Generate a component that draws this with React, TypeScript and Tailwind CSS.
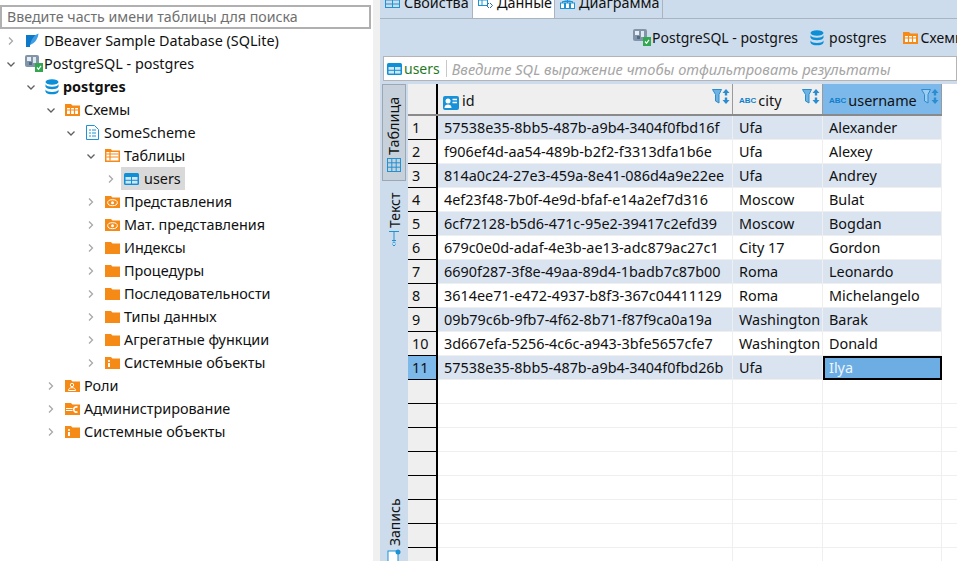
import type { ReactNode } from 'react'

const ROWS = [
  ['57538e35-8bb5-487b-a9b4-3404f0fbd16f', 'Ufa', 'Alexander'],
  ['f906ef4d-aa54-489b-b2f2-f3313dfa1b6e', 'Ufa', 'Alexey'],
  ['814a0c24-27e3-459a-8e41-086d4a9e22ee', 'Ufa', 'Andrey'],
  ['4ef23f48-7b0f-4e9d-bfaf-e14a2ef7d316', 'Moscow', 'Bulat'],
  ['6cf72128-b5d6-471c-95e2-39417c2efd39', 'Moscow', 'Bogdan'],
  ['679c0e0d-adaf-4e3b-ae13-adc879ac27c1', 'City 17', 'Gordon'],
  ['6690f287-3f8e-49aa-89d4-1badb7c87b00', 'Roma', 'Leonardo'],
  ['3614ee71-e472-4937-b8f3-367c04411129', 'Roma', 'Michelangelo'],
  ['09b79c6b-9fb7-4f62-8b71-f87f9ca0a19a', 'Washington', 'Barak'],
  ['3d667efa-5256-4c6c-a943-3bfe5657cfe7', 'Washington', 'Donald'],
  ['57538e35-8bb5-487b-a9b4-3404f0fbd26b', 'Ufa', 'Ilya'],
]

function Chevron({ open }: { open?: boolean }) {
  return (
    <svg width="10" height="10" viewBox="0 0 10 10" className="shrink-0">
      {open ? (
        <path d="M1.500 3.500 5 7l3.500-3.500" fill="none" stroke="#5f5f5f" strokeWidth="1.300" />
      ) : (
        <path d="M3 1.500 6.500 5 3 8.500" fill="none" stroke="#a8a8a8" strokeWidth="1.300" />
      )}
    </svg>
  )
}

function Folder({ children }: { children?: ReactNode }) {
  return (
    <svg width="15" height="13" viewBox="0 0 15 13" className="shrink-0">
      <path d="M0 1h6l1.500 1.600H15V13H0z" fill="#f68a16" />
      {children}
    </svg>
  )
}

const EyeFolder = () => (
  <Folder>
    <ellipse cx="7.500" cy="7.700" rx="4.800" ry="3" fill="none" stroke="#fff" strokeWidth="1" />
    <circle cx="7.500" cy="7.700" r="1.500" fill="#fff" />
  </Folder>
)

const InfoFolder = () => (
  <Folder>
    <rect x="3" y="4.200" width="2" height="1.600" fill="#fff" />
    <rect x="3" y="7" width="2" height="4" fill="#fff" />
  </Folder>
)

const RoleFolder = () => (
  <Folder>
    <circle cx="7" cy="6" r="1.700" fill="none" stroke="#fff" />
    <path d="M3.500 11.500c0-2 1.500-2.800 3.500-2.800s3.500.8 3.500 2.800z" fill="none" stroke="#fff" />
  </Folder>
)

const AdminFolder = () => (
  <Folder>
    <path d="M1 6.500h6.500M1 8.500h6.500" stroke="#fff" strokeWidth="1.200" />
    <path d="M12.500 5.200A2.600 2.600 0 1 0 12.500 9.800" fill="none" stroke="#fff" strokeWidth="1.600" />
  </Folder>
)

const SchemasIcon = () => (
  <svg width="15" height="13" viewBox="0 0 15 13" className="shrink-0">
    <path d="M0 1h6l1.500 1.600H15V13H0z" fill="#f68a16" />
    <path d="M2 5h11v6H2z" fill="#fff" />
    <path d="M5.500 5v6M9.500 5v6M2 7h11" stroke="#f68a16" strokeWidth="1.200" />
  </svg>
)

const TablesIcon = () => (
  <svg width="15" height="13" viewBox="0 0 15 13" className="shrink-0">
    <path d="M0 0h6l1 1.500h8V13H0z" fill="#f68a16" />
    <path d="M1.500 3h12v8.500h-12z" fill="#fff" />
    <path d="M1.500 5h12M1.500 8h12M5 3v8.500" stroke="#f68a16" strokeWidth="1.200" />
  </svg>
)

const DatabaseIcon = () => (
  <svg width="14" height="16" viewBox="0 0 14 16" className="shrink-0">
    <ellipse cx="7" cy="3" rx="6.500" ry="2.800" fill="#0d8fd8" />
    <path d="M.5 5.200c1 1.800 3.500 2.500 6.500 2.500s5.500-.7 6.500-2.500v2.600c-1 1.800-3.500 2.500-6.500 2.500S1.500 9.600.5 7.800z" fill="#0d8fd8" />
    <path d="M.5 10.400c1 1.800 3.500 2.500 6.500 2.500s5.500-.7 6.500-2.500v2.300c-.8 1.800-3.500 2.600-6.500 2.600s-5.700-.8-6.500-2.600z" fill="#0d8fd8" />
  </svg>
)

const SchemeIcon = () => (
  <svg width="15" height="15" viewBox="-1 0 15 15" className="shrink-0">
    <path d="M.5.500h8l4 4v10H.5z" fill="#fff" stroke="#1c93d4" />
    <path d="M3 5h2M6 5h4M3 8h2M6 8h4M3 11h2M6 11h4" stroke="#1c93d4" strokeWidth="1.200" />
  </svg>
)

const TableIcon = () => (
  <svg width="15" height="12" viewBox="0 0 15 12" className="shrink-0">
    <rect x="0" y="0" width="15" height="12" rx="1.500" fill="#0f8fd6" />
    <rect x="1.500" y="4" width="5.500" height="2.800" fill="#cfe7f7" />
    <rect x="8" y="4" width="5.500" height="2.800" fill="#cfe7f7" />
    <rect x="1.500" y="7.800" width="5.500" height="2.800" fill="#cfe7f7" />
    <rect x="8" y="7.800" width="5.500" height="2.800" fill="#cfe7f7" />
  </svg>
)

const PostgresIcon = () => (
  <svg width="18" height="17" viewBox="0 0 18 17" className="shrink-0">
    <rect x="0" y="0" width="14" height="12" rx="2" fill="#8294a8" />
    <rect x="2" y="2" width="4" height="4" fill="#e8eef4" />
    <rect x="8" y="2" width="3" height="6" fill="#dfe7ef" />
    <rect x="4" y="7" width="3" height="3" fill="#4d6c8c" />
    <rect x="10" y="8" width="8" height="9" fill="#2fa84f" />
    <path d="M12 12.500l1.500 1.800 2.500-3.500" fill="none" stroke="#fff" strokeWidth="1.200" />
  </svg>
)

const SqliteIcon = () => (
  <svg width="15" height="15" viewBox="0 0 15 15" className="shrink-0">
    <path d="M1 2h10L8 9l-3 3v2H1z" fill="#0f79c9" />
    <path d="M5 12C6 7 9 2 13.500.5 13 5 10.500 10 5 12z" fill="#3f9fe6" />
  </svg>
)

function TreeRow({
  level, open, icon, label, bold, selected, tight,
}: {
  level: number; open?: boolean; icon: ReactNode; label: string; bold?: boolean; selected?: boolean; tight?: boolean
}) {
  const pad = ['pl-[6px]', 'pl-[26px]', 'pl-[46px]', 'pl-[66px]', 'pl-[86px]', 'pl-[106px]'][level]
  return (
    <div className={`flex h-[23px] items-center ${pad}`}>
      <Chevron open={open} />
      <div className={`ml-[5px] flex h-full items-center ${selected ? 'bg-[#d9d9d9] pl-[3px] pr-[4px]' : 'pl-[4px]'}`}>
        {icon}
        <span className={`whitespace-nowrap ${tight ? 'ml-[1px]' : selected ? 'ml-[5px]' : 'ml-[4px]'} ${bold ? 'font-bold' : ''}`}>{label}</span>
      </div>
    </div>
  )
}

function Tree() {
  return (
    <div className="flex flex-col">
      <TreeRow level={0} icon={<SqliteIcon />} label="DBeaver Sample Database (SQLite)" />
      <TreeRow level={0} open icon={<PostgresIcon />} label="PostgreSQL - postgres" tight />
      <TreeRow level={1} open icon={<DatabaseIcon />} label="postgres" bold />
      <TreeRow level={2} open icon={<SchemasIcon />} label="Схемы" />
      <TreeRow level={3} open icon={<SchemeIcon />} label="SomeScheme" />
      <TreeRow level={4} open icon={<TablesIcon />} label="Таблицы" />
      <TreeRow level={5} icon={<TableIcon />} label="users" selected />
      <TreeRow level={4} icon={<EyeFolder />} label="Представления" />
      <TreeRow level={4} icon={<EyeFolder />} label="Мат. представления" />
      <TreeRow level={4} icon={<Folder />} label="Индексы" />
      <TreeRow level={4} icon={<Folder />} label="Процедуры" />
      <TreeRow level={4} icon={<Folder />} label="Последовательности" />
      <TreeRow level={4} icon={<Folder />} label="Типы данных" />
      <TreeRow level={4} icon={<Folder />} label="Агрегатные функции" />
      <TreeRow level={4} icon={<InfoFolder />} label="Системные объекты" />
      <TreeRow level={2} icon={<RoleFolder />} label="Роли" />
      <TreeRow level={2} icon={<AdminFolder />} label="Администрирование" />
      <TreeRow level={2} icon={<InfoFolder />} label="Системные объекты" />
    </div>
  )
}

const PropsIcon = () => (
  <svg width="15" height="12" viewBox="0 0 15 12" className="shrink-0">
    <rect x=".5" y=".5" width="14" height="11" fill="none" stroke="#1c93d4" />
    <path d="M.5 4h14M.5 8h14M7.500 4v8" stroke="#1c93d4" />
  </svg>
)

const DataIcon = () => (
  <svg width="15" height="13" viewBox="0 0 15 13" className="shrink-0">
    <rect x=".5" y=".5" width="9" height="9" fill="#fff" stroke="#1c93d4" />
    <path d="M.5 4h9M4 .5v9" stroke="#1c93d4" />
    <path d="M11 7l-2.500 2.500L11 12M12 7l2.500 2.500L12 12" fill="none" stroke="#2b6fa8" />
  </svg>
)

const DiagramIcon = () => (
  <svg width="15" height="13" viewBox="0 0 15 13" className="shrink-0">
    <rect x="5" y=".5" width="5" height="3.500" fill="#fff" stroke="#1c93d4" />
    <path d="M2.500 7V5.500h10V7M7.500 4v3" fill="none" stroke="#1c93d4" />
    <rect x=".5" y="7" width="4" height="5.500" fill="#fff" stroke="#1c93d4" />
    <rect x="5.500" y="7" width="4" height="5.500" fill="#fff" stroke="#1c93d4" />
    <rect x="10.500" y="7" width="4" height="5.500" fill="#fff" stroke="#1c93d4" />
  </svg>
)

function Tab({ width, icon, label, active }: { width: string; icon: ReactNode; label: string; active?: boolean }) {
  return (
    <div className={`flex h-[18px] items-start gap-[4px] overflow-hidden border-r border-[#aab4bf] pl-[5px] ${width} ${active ? 'bg-white' : ''}`}>
      <span className="-mt-[4px]">{icon}</span>
      <span className="-mt-[7px] leading-[20px]">{label}</span>
    </div>
  )
}

function Tabs() {
  return (
    <div className="flex h-[19px] shrink-0 items-start border-b border-[#aab4bf]">
      <Tab width="w-[93px]" icon={<PropsIcon />} label="Свойства" />
      <Tab width="w-[82px]" icon={<DataIcon />} label="Данные" active />
      <Tab width="w-[108px]" icon={<DiagramIcon />} label="Диаграмма" />
    </div>
  )
}

function Breadcrumbs() {
  return (
    <div className="flex h-[37px] shrink-0 items-center overflow-hidden pl-[253px] text-[14px] whitespace-nowrap">
      <PostgresIcon />
      <span className="ml-[1px]">PostgreSQL - postgres</span>
      <span className="ml-[12px]"><DatabaseIcon /></span>
      <span className="ml-[5px]">postgres</span>
      <span className="ml-[16px]"><SchemasIcon /></span>
      <span className="ml-[3px]">Схемы</span>
    </div>
  )
}

function FilterBar() {
  return (
    <div className="ml-[3px] flex h-[25px] shrink-0 items-center border border-[#b4b4b4] bg-white pl-[3px] whitespace-nowrap">
      <TableIcon />
      <span className="ml-[2px] text-[14px] text-[#1f7a1f]">users</span>
      <span className="ml-[6px] mr-[5px] h-[17px] w-px bg-[#c8c8c8]" />
      <span className="text-[14.67px] italic text-[#a5a5a5]">Введите SQL выражение чтобы отфильтровать результаты</span>
    </div>
  )
}

const GridTabIcon = () => (
  <svg width="14" height="14" viewBox="0 0 14 14" className="shrink-0">
    <rect x=".5" y=".5" width="13" height="13" fill="none" stroke="#1c93d4" />
    <path d="M.5 4.800h13M.5 9.200h13M4.800.5v13M9.200.5v13" stroke="#1c93d4" />
  </svg>
)

function SideTabs() {
  return (
    <div className="flex w-[28px] shrink-0 flex-col pl-[2px] text-[14px]">
      <div className="flex h-[97px] w-[24px] rotate-180 items-center gap-[3px] border border-[#9da7b1] bg-[#c6d1dc] pt-[8px] text-[14.4px] [writing-mode:vertical-rl]">
        <GridTabIcon />
        <span>Таблица</span>
      </div>
      <div className="mt-[8px] flex h-[58px] w-[24px] rotate-180 items-center gap-[3px] [writing-mode:vertical-rl]">
        <svg width="12" height="16" viewBox="0 0 12 16" className="shrink-0 rotate-180">
          <path d="M1 .5h10M6 .5v9M4 9.500h4" stroke="#1c93d4" fill="none" />
          <path d="M4.500 12 6 10.800 7.500 12M4.500 13.500 6 15l1.500-1.500" stroke="#1c93d4" fill="none" />
        </svg>
        <span>Текст</span>
      </div>
      <div className="mt-auto -mb-[2px] flex h-[66px] w-[24px] rotate-180 items-center gap-[3px] [writing-mode:vertical-rl]">
        <svg width="14" height="14" viewBox="0 0 14 14" className="shrink-0 rotate-180">
          <rect x="1" y="2" width="10" height="12" fill="#fff" stroke="#1c93d4" />
          <circle cx="11" cy="3" r="2.500" fill="#1c93d4" />
        </svg>
        <span>Запись</span>
      </div>
    </div>
  )
}

const FilterSort = ({ light }: { light?: boolean }) => (
  <svg width="18" height="15" viewBox="0 0 18 15" className="shrink-0">
    <path d="M.5.500h9L7 5.500V14L3.500 12V5.500z" fill={light ? '#9fcdf0' : '#6db4e4'} stroke="#2b8ccf" />
    <path d="M14 0l3.500 4h-2.300v2.500h-2.400V4h-2.300zM14 15l3.500-4h-2.300V8.500h-2.400V11h-2.300z" fill="#2b8ccf" />
  </svg>
)

const AbcIcon = () => (
  <span className="mb-[5px] ml-[1px] shrink-0 font-['Liberation_Sans',sans-serif] text-[8px] leading-none font-bold text-[#0f7fca]">ABC</span>
)

const KeyIcon = () => (
  <svg width="16" height="14" viewBox="0 0 16 14" className="mr-[1px] shrink-0">
    <rect width="16" height="14" rx="2" fill="#1792d8" />
    <circle cx="5" cy="5" r="2.500" fill="#fff" />
    <path d="M1.500 12c0-2.500 1.500-3.500 3.500-3.500s3.500 1 3.500 3.500z" fill="#fff" />
    <path d="M9.500 3.500H14M9.500 6.500H14" stroke="#fff" strokeWidth="1.300" />
  </svg>
)

function HeaderCell({
  width, icon, label, selected,
}: {
  width: string; icon: ReactNode; label: string; selected?: boolean
}) {
  return (
    <div className={`flex h-full items-center border-r border-[#9a9a9a] pr-[2px] pl-[5px] ${width} ${selected ? 'bg-[#7db8ea]' : ''}`}>
      <div className="flex items-end gap-[2px] pt-[4px]">
        {icon}
        <span className="leading-[18px]">{label}</span>
      </div>
      <div className="mt-[-5px] ml-auto">
        <FilterSort light={selected} />
      </div>
    </div>
  )
}

function DataGrid() {
  return (
    <div className="min-w-0 flex-1 bg-white">
      <div className="flex h-[32px] w-[534px] border-b-2 border-[#8a8a8a] bg-[#efefef]">
        <div className="w-[30px] shrink-0 border-r-2 border-black" />
        <HeaderCell width="w-[295px]" icon={<KeyIcon />} label="id" />
        <HeaderCell width="w-[90px]" icon={<AbcIcon />} label="city" />
        <HeaderCell width="w-[119px]" icon={<AbcIcon />} label="username" selected />
      </div>
      {ROWS.map((row, i) => {
        const last = i === ROWS.length - 1
        return (
          <div key={row[0]} className="flex h-[24px] w-[534px] leading-[23px]">
            <div className={`w-[30px] shrink-0 border-r-2 border-b border-r-black border-b-black pl-[4px] ${last ? 'bg-[#7db8ea]' : 'bg-[#efefef]'}`}>{i + 1}</div>
            <div className={`flex min-w-0 flex-1 ${i % 2 === 0 ? 'bg-[#dae4f1]' : 'bg-white'}`}>
              <div className="w-[295px] border-r border-b border-[#efefef] pl-[6px] whitespace-nowrap">{row[0]}</div>
              <div className="w-[90px] border-r border-b border-[#efefef] pl-[6px]">{row[1]}</div>
              {last ? (
                <div className="w-[119px] border-2 border-black bg-[#6cade4] pl-[4px] leading-[19px] text-[#eef6fd]">{row[2]}</div>
              ) : (
                <div className="w-[119px] border-r border-b border-[#efefef] pl-[6px]">{row[2]}</div>
              )}
            </div>
          </div>
        )
      })}
      {Array.from({ length: 8 }).map((_, i) => (
        <div key={i} className="flex h-[24px] w-[549px]">
          <div className="w-[30px] shrink-0 border-r-2 border-b border-r-black border-b-black bg-[#efefef]" />
          <div className="w-[295px] border-r border-b border-[#efefef]" />
          <div className="w-[90px] border-r border-b border-[#efefef]" />
          <div className="w-[119px] border-r border-b border-[#efefef]" />
          <div className="flex-1 border-b border-[#efefef]" />
        </div>
      ))}
    </div>
  )
}

export default function App() {
  return (
    <div className="flex h-[561px] w-[957px] overflow-hidden bg-white font-['Noto_Sans',sans-serif] text-[14.4px] text-[#111]">
      <div className="w-[373px] shrink-0 pt-[5px]">
        <div className="flex h-[24px] w-[371px] items-center border-2 border-[#b0b0b0] pl-[5px] text-[14.2px] text-[#6f6f6f]">
          Введите часть имени таблицы для поиска
        </div>
        <Tree />
      </div>
      <div className="w-[7px] shrink-0 bg-[#f0f0f0]" />
      <div className="flex min-w-0 flex-1 flex-col bg-[#cddcec]">
        <Tabs />
        <Breadcrumbs />
        <FilterBar />
        <div className="flex min-h-0 flex-1 pt-[3px]">
          <SideTabs />
          <DataGrid />
        </div>
      </div>
    </div>
  )
}
